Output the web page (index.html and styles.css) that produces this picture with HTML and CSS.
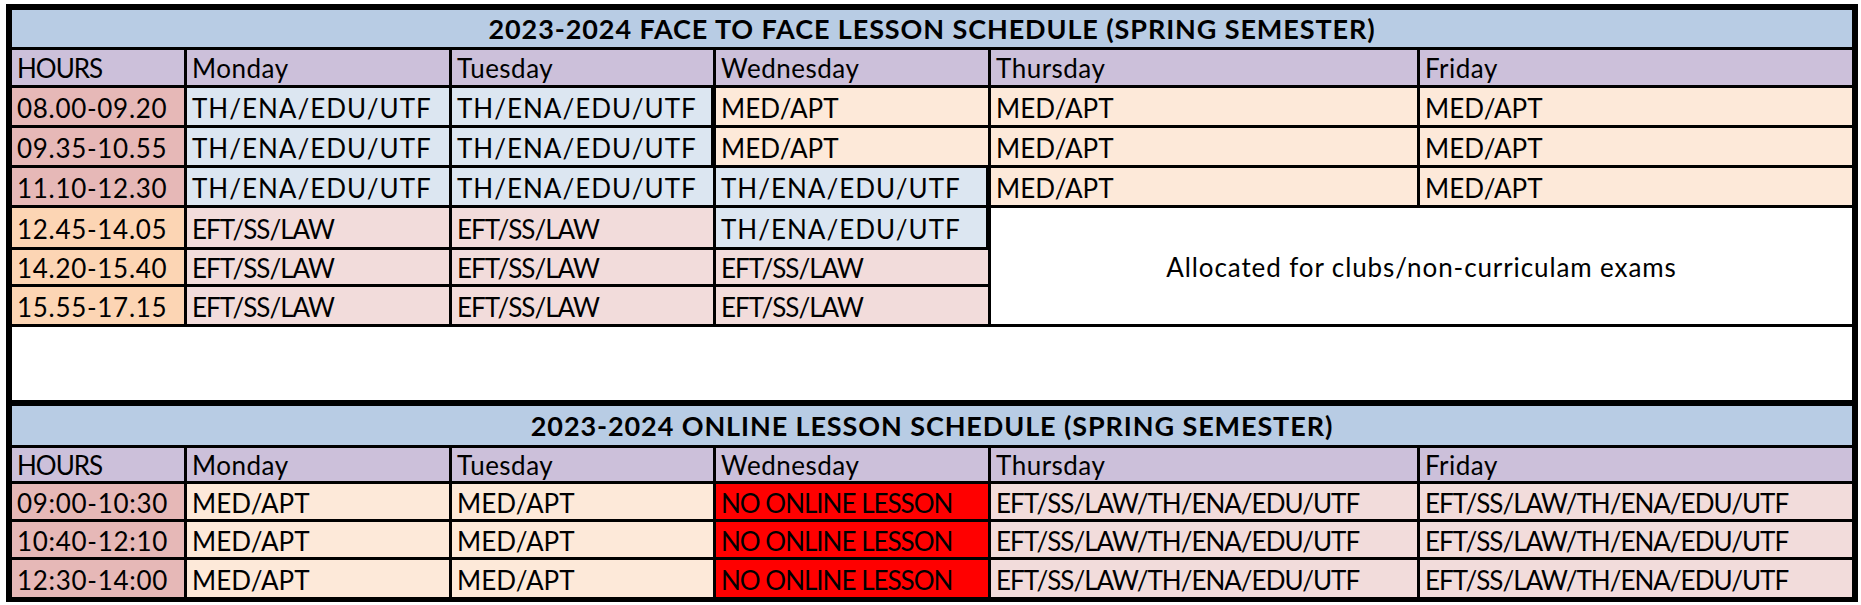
FILE: index.html
```html
<!DOCTYPE html>
<html lang="en">
<head>
<meta charset="utf-8">
<title>2023-2024 Lesson Schedule</title>
<link rel="stylesheet" href="styles.css">
</head>
<body>
<div class="sheet">
  <div class="c title">2023-2024 FACE TO FACE LESSON SCHEDULE (SPRING SEMESTER)</div>

  <div class="c head hrs-h">HOURS</div>
  <div class="c head">Monday</div>
  <div class="c head">Tuesday</div>
  <div class="c head">Wednesday</div>
  <div class="c head">Thursday</div>
  <div class="c head">Friday</div>

  <div class="c hrs-a">08.00-09.20</div>
  <div class="c blue">TH/ENA/EDU/UTF</div>
  <div class="c blue edge">TH/ENA/EDU/UTF</div>
  <div class="c peach">MED/APT</div>
  <div class="c peach">MED/APT</div>
  <div class="c peach">MED/APT</div>

  <div class="c hrs-a">09.35-10.55</div>
  <div class="c blue">TH/ENA/EDU/UTF</div>
  <div class="c blue edge">TH/ENA/EDU/UTF</div>
  <div class="c peach">MED/APT</div>
  <div class="c peach">MED/APT</div>
  <div class="c peach">MED/APT</div>

  <div class="c hrs-a">11.10-12.30</div>
  <div class="c blue">TH/ENA/EDU/UTF</div>
  <div class="c blue">TH/ENA/EDU/UTF</div>
  <div class="c blue edge">TH/ENA/EDU/UTF</div>
  <div class="c peach">MED/APT</div>
  <div class="c peach">MED/APT</div>

  <div class="c hrs-b">12.45-14.05</div>
  <div class="c pink">EFT/SS/LAW</div>
  <div class="c pink">EFT/SS/LAW</div>
  <div class="c blue edge">TH/ENA/EDU/UTF</div>
  <div class="c clubs">Allocated for clubs/non-curriculam exams</div>

  <div class="c hrs-b">14.20-15.40</div>
  <div class="c pink">EFT/SS/LAW</div>
  <div class="c pink">EFT/SS/LAW</div>
  <div class="c pink">EFT/SS/LAW</div>

  <div class="c hrs-b">15.55-17.15</div>
  <div class="c pink">EFT/SS/LAW</div>
  <div class="c pink">EFT/SS/LAW</div>
  <div class="c pink">EFT/SS/LAW</div>

  <div class="c blank"></div>

  <div class="c title">2023-2024 ONLINE LESSON SCHEDULE (SPRING SEMESTER)</div>

  <div class="c head hrs-h">HOURS</div>
  <div class="c head">Monday</div>
  <div class="c head">Tuesday</div>
  <div class="c head">Wednesday</div>
  <div class="c head">Thursday</div>
  <div class="c head">Friday</div>

  <div class="c hrs-a">09:00-10:30</div>
  <div class="c peach">MED/APT</div>
  <div class="c peach">MED/APT</div>
  <div class="c red">NO ONLINE LESSON</div>
  <div class="c pink long">EFT/SS/LAW/TH/ENA/EDU/UTF</div>
  <div class="c pink long">EFT/SS/LAW/TH/ENA/EDU/UTF</div>

  <div class="c hrs-a">10:40-12:10</div>
  <div class="c peach">MED/APT</div>
  <div class="c peach">MED/APT</div>
  <div class="c red">NO ONLINE LESSON</div>
  <div class="c pink long">EFT/SS/LAW/TH/ENA/EDU/UTF</div>
  <div class="c pink long">EFT/SS/LAW/TH/ENA/EDU/UTF</div>

  <div class="c hrs-a">12:30-14:00</div>
  <div class="c peach">MED/APT</div>
  <div class="c peach">MED/APT</div>
  <div class="c red">NO ONLINE LESSON</div>
  <div class="c pink long">EFT/SS/LAW/TH/ENA/EDU/UTF</div>
  <div class="c pink long">EFT/SS/LAW/TH/ENA/EDU/UTF</div>
</div>
</body>
</html>
```
FILE: styles.css
```css
html, body {
  margin: 0;
  padding: 0;
  background: #fff;
}

.sheet {
  margin: 4px 0 0 6px;
  width: 1840px;
  border: 6px solid #000;
  border-bottom-width: 5px;
  background: #000;
  display: grid;
  gap: 3px;
  grid-template-columns: 172px 262px 261px 272px 426px 432px;
  grid-template-rows: 37px 35px 37px 37px 37px 39px 34px 37px 76px 39px 33px 35px 35px 37px;
  font-family: Lato, "Open Sans", sans-serif;
  font-size: 26px;
  color: #000;
}

.c {
  display: flex;
  align-items: center;
  padding: 2px 5px 0;
  white-space: nowrap;
  overflow: hidden;
  background: #fff;
}

.title {
  grid-column: 1 / -1;
  justify-content: center;
  background: #b8cce4;
  font-weight: 700;
  font-size: 27px;
  letter-spacing: 0.9px;
  padding-top: 0;
}

.head { background: #ccc0da; padding-top: 0; letter-spacing: 0.5px; }
.hrs-h { letter-spacing: -1px; }

.hrs-a { background: #e6b8b7; letter-spacing: 0.7px; }
.hrs-b { background: #fcd5b4; letter-spacing: 0.7px; }

.blue  { background: #dce6f1; letter-spacing: 1px; }
.edge  { box-shadow: inset -2px 0 0 #000; }
.peach { background: #fde9d9; }
.pink  { background: #f2dcdb; letter-spacing: -1px; }
.red   { background: #ff0000; letter-spacing: -1px; }

.clubs {
  grid-column: 5 / 7;
  grid-row: 6 / 9;
  justify-content: center;
  letter-spacing: 0.9px;
}

.blank {
  grid-column: 1 / -1;
  border-bottom: 3px solid #000;
}
```
